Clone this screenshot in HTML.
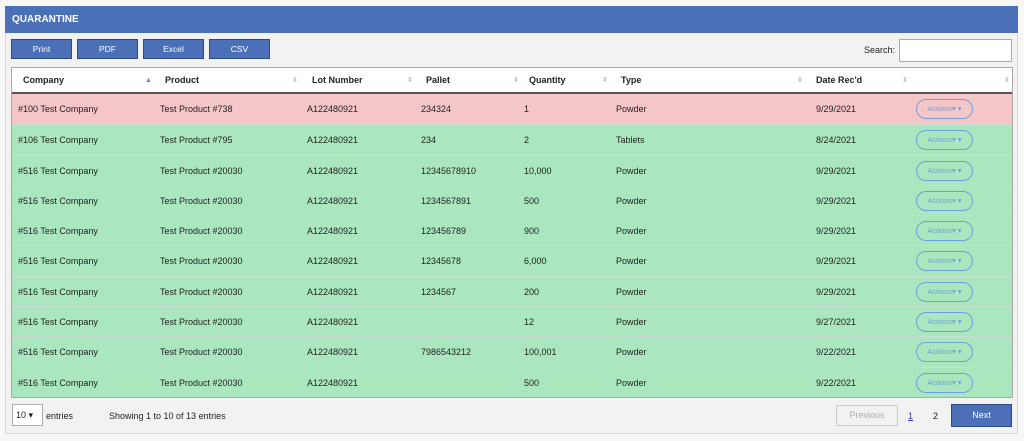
<!DOCTYPE html>
<html><head><style>
*{box-sizing:border-box;margin:0;padding:0}
body{width:1024px;height:441px;background:#f7f7f7;font-family:"Liberation Sans",sans-serif;font-size:9px;color:#222;position:relative;overflow:hidden}
.panel{position:absolute;left:5px;top:6px;width:1013px;height:428px;background:#f2f2f2;border:1px solid #d8d8d8}
.hdr{position:absolute;left:-1px;top:-1px;width:1013px;height:27px;background:#4b70b8;color:#fff;font-weight:bold;font-size:10px;line-height:27px;padding-left:7px}
.btn{position:absolute;top:32px;height:20px;width:61px;background:#4b70b8;border:1px solid #2e4a82;color:#fff;font-size:8.5px;text-align:center;line-height:18px}
.search{position:absolute;left:858px;top:38px;font-size:9px}
.sbox{position:absolute;left:893px;top:32px;width:113px;height:23px;background:#fff;border:1px solid #aaa}
.tbl{position:absolute;left:5px;top:60px;width:1002px;border:1px solid #aaa;background:#fff}
.th{height:26px;position:relative;border-bottom:2px solid #555;font-weight:bold;font-size:9px}
.row{height:30.3px;position:relative;border-top:1px solid #c8dccf}
.row span,.th span{position:absolute;top:0;line-height:25px}
.row span{line-height:30px}
.red{background:#f5c6c7}.grn{background:#aae7bf}
.sort{position:absolute;top:8px;color:#ccc;font-size:7px;line-height:8px}
.act{position:absolute;left:904px;top:5px;width:57px;height:20px;border:1px solid #6aa0e0;border-radius:10px;color:#6aa0e0;font-size:7.5px;text-align:center;line-height:18px}
.ft{position:absolute;font-size:9px}
</style></head><body>
<div class="panel">
<div class="hdr">QUARANTINE</div>
<div class="btn" style="left:5px">Print</div>
<div class="btn" style="left:71px">PDF</div>
<div class="btn" style="left:137px">Excel</div>
<div class="btn" style="left:203px">CSV</div>
<div class="search">Search:</div>
<div class="sbox"></div>
<div class="tbl">
<div class="th">
<span style="left:11px">Company</span><span class="sort" style="left:133px;color:#6c7fd8">▲</span>
<span style="left:153px">Product</span><span class="sort" style="left:280px">⬍</span>
<span style="left:300px">Lot Number</span><span class="sort" style="left:395px">⬍</span>
<span style="left:414px">Pallet</span><span class="sort" style="left:501px">⬍</span>
<span style="left:517px">Quantity</span><span class="sort" style="left:590px">⬍</span>
<span style="left:609px">Type</span><span class="sort" style="left:785px">⬍</span>
<span style="left:804px">Date Rec'd</span><span class="sort" style="left:890px">⬍</span>
<span class="sort" style="left:992px">⬍</span>
</div>
<div class="row red" style="border-top:none"><span style="left:6px">#100 Test Company</span><span style="left:148px">Test Product #738</span><span style="left:295px">A122480921</span><span style="left:409px">234324</span><span style="left:512px">1</span><span style="left:604px">Powder</span><span style="left:804px">9/29/2021</span><div class="act">Actions▾ ▾</div></div>
<div class="row grn"><span style="left:6px">#106 Test Company</span><span style="left:148px">Test Product #795</span><span style="left:295px">A122480921</span><span style="left:409px">234</span><span style="left:512px">2</span><span style="left:604px">Tablets</span><span style="left:804px">8/24/2021</span><div class="act">Actions▾ ▾</div></div>
<div class="row grn"><span style="left:6px">#516 Test Company</span><span style="left:148px">Test Product #20030</span><span style="left:295px">A122480921</span><span style="left:409px">12345678910</span><span style="left:512px">10,000</span><span style="left:604px">Powder</span><span style="left:804px">9/29/2021</span><div class="act">Actions▾ ▾</div></div>
<div class="row grn"><span style="left:6px">#516 Test Company</span><span style="left:148px">Test Product #20030</span><span style="left:295px">A122480921</span><span style="left:409px">1234567891</span><span style="left:512px">500</span><span style="left:604px">Powder</span><span style="left:804px">9/29/2021</span><div class="act">Actions▾ ▾</div></div>
<div class="row grn"><span style="left:6px">#516 Test Company</span><span style="left:148px">Test Product #20030</span><span style="left:295px">A122480921</span><span style="left:409px">123456789</span><span style="left:512px">900</span><span style="left:604px">Powder</span><span style="left:804px">9/29/2021</span><div class="act">Actions▾ ▾</div></div>
<div class="row grn"><span style="left:6px">#516 Test Company</span><span style="left:148px">Test Product #20030</span><span style="left:295px">A122480921</span><span style="left:409px">12345678</span><span style="left:512px">6,000</span><span style="left:604px">Powder</span><span style="left:804px">9/29/2021</span><div class="act">Actions▾ ▾</div></div>
<div class="row grn"><span style="left:6px">#516 Test Company</span><span style="left:148px">Test Product #20030</span><span style="left:295px">A122480921</span><span style="left:409px">1234567</span><span style="left:512px">200</span><span style="left:604px">Powder</span><span style="left:804px">9/29/2021</span><div class="act">Actions▾ ▾</div></div>
<div class="row grn"><span style="left:6px">#516 Test Company</span><span style="left:148px">Test Product #20030</span><span style="left:295px">A122480921</span><span style="left:512px">12</span><span style="left:604px">Powder</span><span style="left:804px">9/27/2021</span><div class="act">Actions▾ ▾</div></div>
<div class="row grn"><span style="left:6px">#516 Test Company</span><span style="left:148px">Test Product #20030</span><span style="left:295px">A122480921</span><span style="left:409px">7986543212</span><span style="left:512px">100,001</span><span style="left:604px">Powder</span><span style="left:804px">9/22/2021</span><div class="act">Actions▾ ▾</div></div>
<div class="row grn"><span style="left:6px">#516 Test Company</span><span style="left:148px">Test Product #20030</span><span style="left:295px">A122480921</span><span style="left:512px">500</span><span style="left:604px">Powder</span><span style="left:804px">9/22/2021</span><div class="act">Actions▾ ▾</div></div>
</div>
<div class="ft" style="left:6px;top:397px;width:31px;height:22px;background:#fff;border:1px solid #aaa;line-height:20px;padding-left:3px">10 ▾</div>
<div class="ft" style="left:40px;top:404px">entries</div>
<div class="ft" style="left:103px;top:404px">Showing 1 to 10 of 13 entries</div>
<div class="ft" style="left:830px;top:398px;width:62px;height:21px;border:1px solid #ccc;color:#aaa;text-align:center;line-height:19px">Previous</div>
<div class="ft" style="left:902px;top:404px;color:#33c;text-decoration:underline">1</div>
<div class="ft" style="left:927px;top:404px">2</div>
<div class="ft" style="left:945px;top:397px;width:61px;height:23px;background:#4b70b8;border:1px solid #2e4a82;color:#fff;text-align:center;line-height:21px">Next</div>
</div>
</body></html>
